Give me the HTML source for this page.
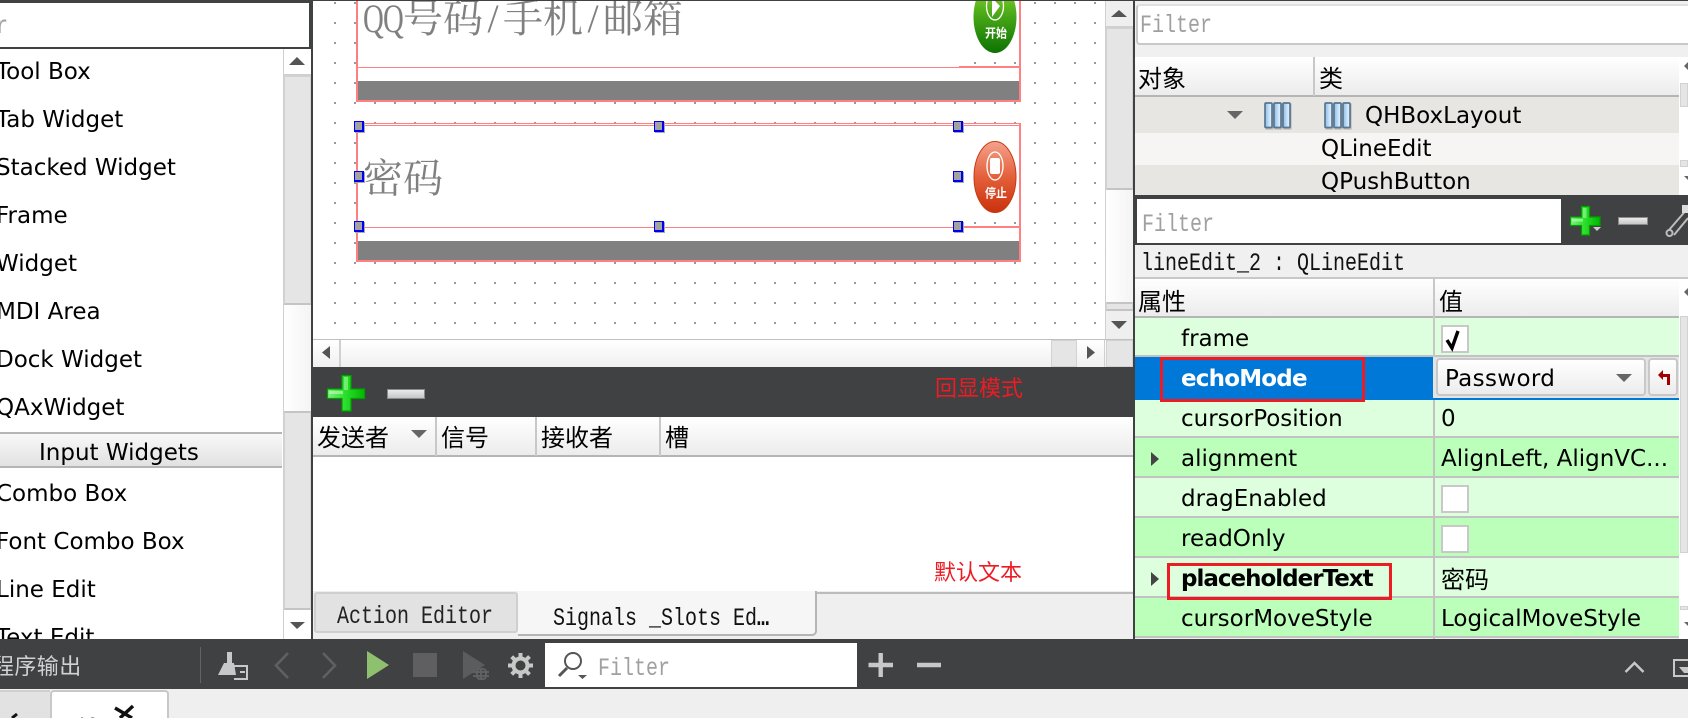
<!DOCTYPE html>
<html><head><meta charset="utf-8"><style>
html{width:1688px;height:718px;overflow:hidden;margin:0;padding:0}
body{margin:0;padding:0;width:1688px;height:718px;position:relative;overflow:hidden;background:#efefef;font-family:"DejaVu Sans","Noto Sans CJK SC",sans-serif;color:#000}
div,span.a{position:absolute}
.t{font-size:23px;height:40px;line-height:40px;white-space:nowrap;letter-spacing:0}
.c{font-family:"Noto Sans CJK SC",sans-serif;font-size:24px;height:40px;line-height:40px;white-space:nowrap}
.m{font-family:"Liberation Mono",monospace;font-size:20px;height:30px;line-height:30px;white-space:nowrap;transform:scaleY(1.25)}
.hd{background:linear-gradient(#fff,#ececec);border-bottom:2px solid #b5b5b5;box-sizing:border-box}
.sep{width:2px;background:#c8c8c8}
.g{background:#e5e5e5;box-sizing:border-box;border:1px solid #d2d2d2}
.lr{background:#ff8080}
.bar{background:#808080}
.h{width:7px;height:8px;background:#a2a2a2;border:2px solid #0000f0;border-top-width:1px;border-left-width:1px;box-shadow:1px 1px 0 #aaa}
.ph{font-family:"Noto Serif CJK SC",serif;color:#808080;font-size:40px;white-space:nowrap;line-height:50px;height:50px}
.q{display:inline-block;width:20px;font-family:"Liberation Serif",serif;transform:scaleX(.72);transform-origin:0 50%}
.s{display:inline-block;width:20px;text-align:center;font-family:"Liberation Serif",serif}
.row{left:1135px;width:544px;height:40px;box-sizing:border-box;border-bottom:2px solid #c2c2c2}
.cb{width:28px;height:28px;box-sizing:border-box;background:#fff;border:2px solid #c8c8c8}
.red{font-family:"Noto Sans CJK SC",sans-serif;font-size:22px;font-weight:400;color:#ed1c24;white-space:nowrap;height:30px;line-height:30px}
.rb{border:3px solid #ed1c24;box-sizing:border-box}
</style></head><body>

<!-- LEFT PANEL -->
<div style="left:0;top:0;width:1688px;height:1px;background:#404142"></div>
<div style="left:0;top:0;width:313px;height:49px;background:#404142"></div>
<div style="left:0;top:3px;width:309px;height:44px;background:#fff"></div>
<div class="m" style="left:-64px;top:13px;color:#a0a0a0">Filter</div>
<div style="left:0;top:49px;width:311px;height:590px;background:#fff;overflow:hidden">
 <div class="t" style="left:-4px;top:3px">Tool Box</div>
 <div class="t" style="left:-4px;top:51px">Tab Widget</div>
 <div class="t" style="left:-4px;top:99px">Stacked Widget</div>
 <div class="t" style="left:-4px;top:147px">Frame</div>
 <div class="t" style="left:-4px;top:195px">Widget</div>
 <div class="t" style="left:-4px;top:243px">MDI Area</div>
 <div class="t" style="left:-4px;top:291px">Dock Widget</div>
 <div class="t" style="left:-4px;top:339px">QAxWidget</div>
 <div style="left:0;top:383px;width:282px;height:36px;box-sizing:border-box;background:linear-gradient(#f8f8f8,#e2e2e2);border-top:2px solid #b5b5b5;border-bottom:2px solid #b5b5b5"></div>
 <div class="t" style="left:39px;top:384px">Input Widgets</div>
 <div class="t" style="left:-4px;top:425px">Combo Box</div>
 <div class="t" style="left:-4px;top:473px">Font Combo Box</div>
 <div class="t" style="left:-4px;top:521px">Line Edit</div>
 <div class="t" style="left:-4px;top:569px">Text Edit</div>
 <!-- scrollbar -->
 <div style="left:283px;top:0;width:1px;height:590px;background:#d0d0d0"></div>
 <div class="g" style="left:284px;top:27px;width:27px;height:229px;border-bottom:2px solid #c4c4c4"></div>
 <div style="left:284px;top:256px;width:27px;height:106px;background:linear-gradient(90deg,#fff,#f4f4f4)"></div>
 <div class="g" style="left:284px;top:362px;width:27px;height:199px;border-top:2px solid #c4c4c4;border-bottom:2px solid #c4c4c4"></div>
 <div style="left:284px;top:25px;width:27px;height:2px;background:#d0d0d0"></div>
</div>
<div style="left:311px;top:0;width:2px;height:639px;background:#404142"></div>

<!-- CANVAS -->
<div style="left:313px;top:1px;width:792px;height:338px;background:#fff"></div>
<svg style="position:absolute;left:0;top:0" width="1688" height="340">
 <defs><pattern id="d" x="334" y="2" width="20" height="20" patternUnits="userSpaceOnUse"><rect width="2" height="2" fill="#999"/></pattern></defs>
 <rect x="334" y="2" width="763" height="322" fill="url(#d)"/>
</svg>
<!-- form 1 -->
<div style="left:357px;top:0;width:664px;height:101px;background:#fff"></div>
<div class="ph" style="left:363px;top:-9px"><span class="q">Q</span><span class="q">Q</span>号码<span class="s">/</span>手机<span class="s">/</span>邮箱</div>
<div class="lr" style="left:356px;top:0;width:2px;height:101px"></div>
<div class="lr" style="left:358px;top:67px;width:601px;height:1px"></div>
<div class="lr" style="left:959px;top:66px;width:60px;height:2px"></div>
<div class="lr" style="left:1019px;top:0;width:2px;height:68px"></div>
<div class="bar" style="left:358px;top:81px;width:661px;height:19px"></div>
<div class="lr" style="left:356px;top:100px;width:665px;height:2px"></div>
<div class="lr" style="left:1019px;top:68px;width:2px;height:33px"></div>
<!-- form 2 -->
<div style="left:357px;top:123px;width:664px;height:139px;background:#fff"></div>
<div class="ph" style="left:363px;top:151px">密码</div>
<div class="lr" style="left:356px;top:123px;width:665px;height:1px"></div>
<div class="lr" style="left:358px;top:125px;width:661px;height:1px"></div>
<div class="lr" style="left:356px;top:123px;width:2px;height:139px"></div>
<div class="lr" style="left:358px;top:227px;width:601px;height:1px"></div>
<div class="lr" style="left:959px;top:226px;width:60px;height:2px"></div>
<div class="lr" style="left:1019px;top:123px;width:2px;height:139px"></div>
<div class="bar" style="left:358px;top:241px;width:661px;height:19px"></div>
<div class="lr" style="left:356px;top:260px;width:665px;height:2px"></div>
<svg style="position:absolute;left:0;top:0" width="1688" height="340">
 <defs>
  <linearGradient id="gr" x1="0" y1="0" x2="0" y2="1"><stop offset="0" stop-color="#8fe030"/><stop offset=".5" stop-color="#46a516"/><stop offset="1" stop-color="#0d7203"/></linearGradient>
  <linearGradient id="rd" x1="0" y1="0" x2="0" y2="1"><stop offset="0" stop-color="#f4a28c"/><stop offset=".5" stop-color="#e4603a"/><stop offset="1" stop-color="#c9310c"/></linearGradient>
 </defs>
 <g fill="#999">
  <rect x="974" y="62" width="2" height="2"/><rect x="994" y="62" width="2" height="2"/><rect x="1014" y="62" width="2" height="2"/>
  <rect x="974" y="222" width="2" height="2"/><rect x="994" y="222" width="2" height="2"/><rect x="1014" y="222" width="2" height="2"/>
 </g>
 <ellipse cx="995" cy="17" rx="21.5" ry="36" fill="url(#gr)"/>
 <ellipse cx="995" cy="6" rx="8.5" ry="14" fill="none" stroke="#fff" stroke-width="1.3"/>
 <path d="M992 -2L1000 6L992 17Z" fill="#fff"/>
 <ellipse cx="995" cy="177" rx="21" ry="35.5" fill="url(#rd)" stroke="#c63a12" stroke-width="1"/>
 <ellipse cx="995" cy="166" rx="8" ry="14" fill="none" stroke="#fff" stroke-width="1.3"/>
 <rect x="990" y="158" width="10" height="16" rx="2" fill="#fff"/>
</svg>
<div style="left:984px;top:26px;width:24px;text-align:center;font:bold 11px/14px 'Noto Sans CJK SC',sans-serif;color:#fff;white-space:nowrap;transform:scaleY(1.15)">开始</div>
<div style="left:984px;top:186px;width:24px;text-align:center;font:bold 11px/14px 'Noto Sans CJK SC',sans-serif;color:#fff;white-space:nowrap;transform:scaleY(1.15)">停止</div>
<!-- handles -->
<div class="h" style="left:354px;top:121px"></div><div class="h" style="left:654px;top:121px"></div><div class="h" style="left:953px;top:121px"></div>
<div class="h" style="left:354px;top:171px"></div><div class="h" style="left:953px;top:171px"></div>
<div class="h" style="left:354px;top:221px"></div><div class="h" style="left:654px;top:221px"></div><div class="h" style="left:953px;top:221px"></div>

<!-- canvas scrollbars -->
<div style="left:1105px;top:1px;width:1px;height:338px;background:#d0d0d0"></div>
<div class="g" style="left:1106px;top:28px;width:27px;height:162px;border-bottom:2px solid #c4c4c4"></div>
<div style="left:1106px;top:26px;width:27px;height:2px;background:#d0d0d0"></div>
<div style="left:1106px;top:190px;width:27px;height:112px;background:linear-gradient(90deg,#fff,#f4f4f4)"></div>
<div class="g" style="left:1106px;top:302px;width:27px;height:9px;border-top:2px solid #c4c4c4;border-bottom:2px solid #c4c4c4"></div>
<div style="left:313px;top:339px;width:820px;height:28px;background:linear-gradient(#fff,#f0f0f0);border-top:1px solid #c0c0c0;box-sizing:border-box"></div>
<div style="left:339px;top:340px;width:2px;height:27px;background:#d0d0d0"></div>
<div class="g" style="left:1051px;top:340px;width:26px;height:27px"></div>
<div style="left:1104px;top:340px;width:1px;height:27px;background:#d0d0d0"></div>
<div class="g" style="left:1106px;top:340px;width:27px;height:27px"></div>
<div style="left:1133px;top:0;width:2px;height:639px;background:#404142"></div>

<!-- SIGNAL/SLOT -->
<div style="left:313px;top:367px;width:820px;height:50px;background:#404142"></div>
<div class="red" style="left:935px;top:372px">回显模式</div>
<div class="hd" style="left:313px;top:417px;width:820px;height:40px"></div>
<div class="sep" style="left:435px;top:417px;height:39px"></div>
<div class="sep" style="left:535px;top:417px;height:39px"></div>
<div class="sep" style="left:659px;top:417px;height:39px"></div>
<div class="c" style="left:317px;top:416px">发送者</div>
<div class="c" style="left:441px;top:416px">信号</div>
<div class="c" style="left:541px;top:416px">接收者</div>
<div class="c" style="left:665px;top:416px">槽</div>
<div style="left:313px;top:457px;width:820px;height:134px;background:#fff"></div>
<div class="red" style="left:934px;top:556px">默认文本</div>
<div style="left:313px;top:591px;width:820px;height:48px;background:#efefef"></div>
<div style="left:815px;top:592px;width:318px;height:2px;background:#bcbcbc"></div>
<div style="left:314px;top:592px;width:204px;height:41px;box-sizing:border-box;background:#e2e2e2;border:2px solid #cfcfcf;border-radius:3px"></div>
<div class="m" style="left:337px;top:603px;color:#222">Action Editor</div>
<div style="left:518px;top:591px;width:299px;height:45px;box-sizing:border-box;background:#f6f6f6;border-right:2px solid #b5b5b5;border-bottom:2px solid #b5b5b5;border-bottom-right-radius:5px"></div>
<div class="m" style="left:553px;top:605px;color:#111">Signals _Slots Ed<span style="font-weight:bold;letter-spacing:-6px">…</span></div>

<!-- RIGHT TOP -->
<div style="left:1135px;top:0;width:553px;height:195px;background:#f0f0f0"></div>
<div style="left:0;top:0;width:1688px;height:1px;background:#404142"></div>
<div style="left:1136px;top:4px;width:560px;height:41px;box-sizing:border-box;background:#fff;border:2px solid #c8c8c8;border-top-color:#e0e0e0;border-radius:4px"></div>
<div class="m" style="left:1140px;top:12px;color:#a0a0a0">Filter</div>
<div class="hd" style="left:1135px;top:57px;width:544px;height:40px"></div>
<div class="sep" style="left:1313px;top:57px;height:39px"></div>
<div class="c" style="left:1138px;top:57px">对象</div>
<div class="c" style="left:1319px;top:57px">类</div>
<div style="left:1135px;top:97px;width:544px;height:36px;background:#e8e6e3"></div>
<div style="left:1135px;top:133px;width:544px;height:32px;background:#f6f5f3"></div>
<div style="left:1135px;top:165px;width:544px;height:30px;background:#e8e6e3"></div>
<div class="t" style="left:1365px;top:96px">QHBoxLayout</div>
<div class="t" style="left:1321px;top:129px">QLineEdit</div>
<div class="t" style="left:1321px;top:162px">QPushButton</div>
<div style="left:1679px;top:57px;width:9px;height:138px;background:#fff"></div>
<div class="g" style="left:1680px;top:83px;width:8px;height:24px"></div>
<div class="g" style="left:1680px;top:160px;width:8px;height:7px"></div>

<!-- RIGHT PROPERTY -->
<div style="left:1135px;top:195px;width:553px;height:50px;background:#404142"></div>
<div style="left:1137px;top:199px;width:424px;height:44px;background:#fff"></div>
<div class="m" style="left:1142px;top:211px;color:#a0a0a0">Filter</div>
<div style="left:1135px;top:245px;width:553px;height:34px;background:#f0f0f0;border-bottom:2px solid #c8c8c8;box-sizing:border-box"></div>
<div class="m" style="left:1141px;top:250px;color:#111;height:30px">lineEdit_2 : QLineEdit</div>
<div class="hd" style="left:1135px;top:279px;width:544px;height:39px"></div>
<div class="c" style="left:1138px;top:280px">属性</div>
<div class="c" style="left:1439px;top:280px">值</div>

<div class="row" style="top:318px;height:39px;background:#ddffdd"></div>
<div class="row" style="top:357px;height:42px;background:#0078d7;border-bottom:2px solid #0078d7"></div>
<div class="row" style="top:399px;height:39px;background:#ddffdd"></div>
<div class="row" style="top:438px;background:#bbffbb"></div>
<div class="row" style="top:478px;background:#ddffdd"></div>
<div class="row" style="top:518px;background:#bbffbb"></div>
<div class="row" style="top:558px;background:#ddffdd"></div>
<div class="row" style="top:598px;background:#bbffbb"></div>
<div style="left:1433px;top:279px;width:2px;height:78px;background:#c8c8c8"></div>
<div style="left:1433px;top:399px;width:2px;height:240px;background:#c2c2c2"></div>
<div style="left:1433px;top:357px;width:246px;height:41px;background:#e4e4e4"></div>
<div style="left:1135px;top:398px;width:544px;height:2px;background:#0078d7"></div>
<div style="left:1436px;top:358px;width:210px;height:38px;box-sizing:border-box;background:linear-gradient(#fff,#ececec);border:2px solid #c8c8c8;border-radius:4px"></div>
<div style="left:1648px;top:358px;width:30px;height:38px;box-sizing:border-box;background:linear-gradient(#fff,#ececec);border:2px solid #c8c8c8;border-radius:4px"></div>

<div class="t" style="left:1181px;top:319px">frame</div>
<div class="t" style="left:1181px;top:359px;color:#fff;font-weight:bold;letter-spacing:-.8px">echoMode</div>
<div class="t" style="left:1445px;top:359px;letter-spacing:.35px">Password</div>
<div class="t" style="left:1181px;top:399px">cursorPosition</div>
<div class="t" style="left:1441px;top:399px">0</div>
<div class="t" style="left:1181px;top:439px">alignment</div>
<div class="t" style="left:1441px;top:439px">AlignLeft, AlignVC...</div>
<div class="t" style="left:1181px;top:479px">dragEnabled</div>
<div class="t" style="left:1181px;top:519px">readOnly</div>
<div class="t" style="left:1181px;top:559px;font-weight:bold;letter-spacing:-1px">placeholderText</div>
<div class="c" style="left:1441px;top:558px">密码</div>
<div class="t" style="left:1181px;top:599px">cursorMoveStyle</div>
<div class="t" style="left:1441px;top:599px">LogicalMoveStyle</div>
<div class="cb" style="left:1441px;top:325px"></div>
<div class="cb" style="left:1441px;top:485px"></div>
<div class="cb" style="left:1441px;top:525px"></div>
<div style="left:1679px;top:279px;width:9px;height:360px;background:#fff"></div>
<div class="g" style="left:1680px;top:316px;width:8px;height:237px"></div>
<div class="g" style="left:1680px;top:606px;width:8px;height:4px"></div>
<div class="rb" style="left:1160px;top:357px;width:205px;height:45px"></div>
<div class="rb" style="left:1167px;top:563px;width:225px;height:37px"></div>

<!-- BOTTOM BAR -->
<div style="left:0;top:639px;width:1688px;height:50px;background:#404142"></div>
<div class="c" style="left:-8px;top:645px;font-size:22px;color:#d2d2d2;letter-spacing:.4px">程序输出</div>
<div style="left:200px;top:647px;width:1px;height:36px;background:#626365"></div>
<div style="left:545px;top:643px;width:312px;height:44px;background:#fff"></div>
<div class="m" style="left:598px;top:655px;color:#a0a0a0">Filter</div>

<!-- tabs -->
<div style="left:0;top:690px;width:50px;height:28px;background:#e2e2e2;border-top:2px solid #cfcfcf;box-sizing:border-box"></div>
<div style="left:50px;top:690px;width:119px;height:34px;box-sizing:border-box;background:#fff;border:2px solid #c8c8c8;border-radius:4px"></div>
<div class="m" style="left:76px;top:712px;color:#222;font-size:18px">16</div>

<!-- ICONS -->
<svg style="position:absolute;left:0;top:0" width="1688" height="718" viewBox="0 0 1688 718">
 <defs>
  <linearGradient id="mg" x1="0" y1="0" x2="0" y2="1"><stop offset="0" stop-color="#eee"/><stop offset="1" stop-color="#c4c4c4"/></linearGradient>
  <linearGradient id="bl" x1="0" y1="0" x2="1" y2="0"><stop offset="0" stop-color="#8dbce8"/><stop offset=".6" stop-color="#c8e2f8"/><stop offset="1" stop-color="#eaf5fd"/></linearGradient>
  <linearGradient id="p1" x1="0" y1="0" x2="1" y2="0"><stop offset="0" stop-color="#80f080"/><stop offset=".45" stop-color="#30e030"/><stop offset="1" stop-color="#00b800"/></linearGradient>
 </defs>
 <!-- scroll arrows -->
 <g fill="#555">
  <path d="M289 65L297 57L305 65Z"/><path d="M290 622L305 622L297 629Z"/>
  <path d="M1111 17L1119 10L1127 17Z"/><path d="M1111 321L1127 321L1119 329Z"/>
  <path d="M330 346L330 359L322 352.5Z"/><path d="M1087 346L1087 359L1095 352.5Z"/>
 </g>
 <g fill="#666">
  <path d="M1684 66L1688 62L1688 70Z"/><path d="M1684 292L1688 288L1688 296Z"/>
  <path d="M1684 176L1688 180L1688 176Z"/><path d="M1684 622L1688 626L1688 622Z"/>
  <path d="M411 430H427L419 438Z"/>
  <path d="M1227 111H1243L1235 119Z"/>
  <path d="M1616 374H1632L1624 382Z"/>
 </g>
 <g fill="#444"><path d="M1151 452L1159 459L1151 466Z"/><path d="M1151 572L1159 579L1151 586Z"/></g>
 <!-- green plus bottom -->
 <path d="M342 375.5H351V389H364.5V398.500H351V411H342V398.500H327.500V389H342Z" fill="url(#p1)" stroke="#00a000" stroke-width="1.2"/>
 <rect x="344" y="377" width="4" height="13" fill="#a0f8a0" opacity=".6"/>
 <rect x="329" y="391" width="14" height="3" fill="#c0ffc0" opacity=".6"/>
 <rect x="387.5" y="389.5" width="37" height="9" fill="url(#mg)" stroke="#8a8a8a"/>
 <!-- green plus props -->
 <path d="M1581.500 206.500H1589.500V217H1600V225.500H1589.500V235H1581.500V225.500H1570.500V217H1581.500Z" fill="url(#p1)" stroke="#00a000" stroke-width="1.2"/>
 <rect x="1583" y="208" width="3.500" height="10" fill="#a0f8a0" opacity=".6"/>
 <rect x="1572" y="219" width="11" height="2.500" fill="#c0ffc0" opacity=".6"/>
 <path d="M1593 227H1601L1597 231Z" fill="#ccc"/>
 <rect x="1618.5" y="217.5" width="29" height="7" fill="url(#mg)" stroke="#8a8a8a"/>
 <!-- wrench -->
 <g fill="none" stroke="#bdbdbd" stroke-width="2"><path d="M1669 230L1688 208M1674 235L1688 218"/><circle cx="1669.5" cy="233" r="3"/></g>
 <path d="M1682 205h6v8h-6z" fill="#ddd"/>
 <!-- layout icons -->
 <g stroke="#8a8a88" stroke-width="1" fill="none" opacity=".6">
  <rect x="1266" y="104" width="7" height="25"/><rect x="1275" y="104" width="7" height="25"/><rect x="1284" y="104" width="7" height="25"/>
  <rect x="1326" y="104" width="7" height="25"/><rect x="1335" y="104" width="7" height="25"/><rect x="1344" y="104" width="7" height="25"/>
 </g>
 <g stroke="#5a7690" stroke-width="1.7" fill="url(#bl)">
  <rect x="1265" y="103" width="7" height="24.500" rx="1"/><rect x="1274" y="103" width="7" height="24.500" rx="1"/><rect x="1283" y="103" width="7" height="24.500" rx="1"/>
  <rect x="1325" y="103" width="7" height="24.500" rx="1"/><rect x="1334" y="103" width="7" height="24.500" rx="1"/><rect x="1343" y="103" width="7" height="24.500" rx="1"/>
 </g>
 <!-- checkmark -->
 <path d="M1447 340L1452 348L1458 331" fill="none" stroke="#000" stroke-width="3.4"/>
 <!-- reset -->
 <path d="M1663 370L1658 375L1663 380V377H1667V385H1670V374H1663Z" fill="#a00000"/>
 <!-- broom -->
 <rect x="227" y="652" width="5" height="11" fill="#c8c8c8"/>
 <path d="M224 663H234L236 675H218Z" fill="#c8c8c8"/>
 <path d="M234 666H247V679H234M240 672H245" fill="none" stroke="#c8c8c8" stroke-width="2"/>
 <!-- nav -->
 <path d="M288 653L276 665.5L288 678" fill="none" stroke="#5f6062" stroke-width="2.6"/>
 <path d="M323 653L335 665.5L323 678" fill="none" stroke="#5f6062" stroke-width="2.6"/>
 <path d="M367 651L389 665L367 679Z" fill="#8fc06f"/>
 <rect x="413" y="653" width="24" height="24" fill="#5f5f61"/>
 <path d="M463 651L485 665L463 679Z" fill="#5b5c5e"/>
 <g fill="none" stroke="#5f6062" stroke-width="2"><rect x="477" y="669" width="9" height="10" rx="3" fill="#404142"/><path d="M473 672h16M473 676h16M481 669v10"/></g>
 <!-- gear -->
 <g fill="none" stroke="#c8c8c8"><circle cx="520.5" cy="665.5" r="7" stroke-width="4"/><path d="M520.5 653v5M520.5 673v5M508 665.5h5M528 665.5h5M511.7 656.7l3.5 3.5M526 671l3.5 3.5M511.7 674.3l3.5-3.5M526 660l3.5-3.5" stroke-width="4"/></g>
 <!-- magnifier -->
 <circle cx="573" cy="661" r="8" fill="none" stroke="#555" stroke-width="2"/>
 <path d="M567 668L559 676" stroke="#555" stroke-width="3"/>
 <path d="M578 675H587L582.5 679Z" fill="#555"/>
 <!-- plus minus bottom -->
 <path d="M868.5 665H893M880.7 653V677M917 665H941" stroke="#c8c8c8" stroke-width="4.4" fill="none"/>
 <!-- chevron -->
 <path d="M1625.5 672L1634.5 663L1643.5 672" fill="none" stroke="#c8c8c8" stroke-width="2.4"/>
 <rect x="1674" y="660" width="16" height="16" fill="none" stroke="#c8c8c8" stroke-width="2"/>
 <path d="M1679 667H1688V673H1684Z" fill="#c8c8c8"/>
 <!-- tab marks -->
 <path d="M115 708L132 718M133 706L120 718" stroke="#111" stroke-width="3.4" fill="none"/>
 <path d="M12 718L17 714" stroke="#111" stroke-width="3" fill="none"/>
</svg>
</body></html>
